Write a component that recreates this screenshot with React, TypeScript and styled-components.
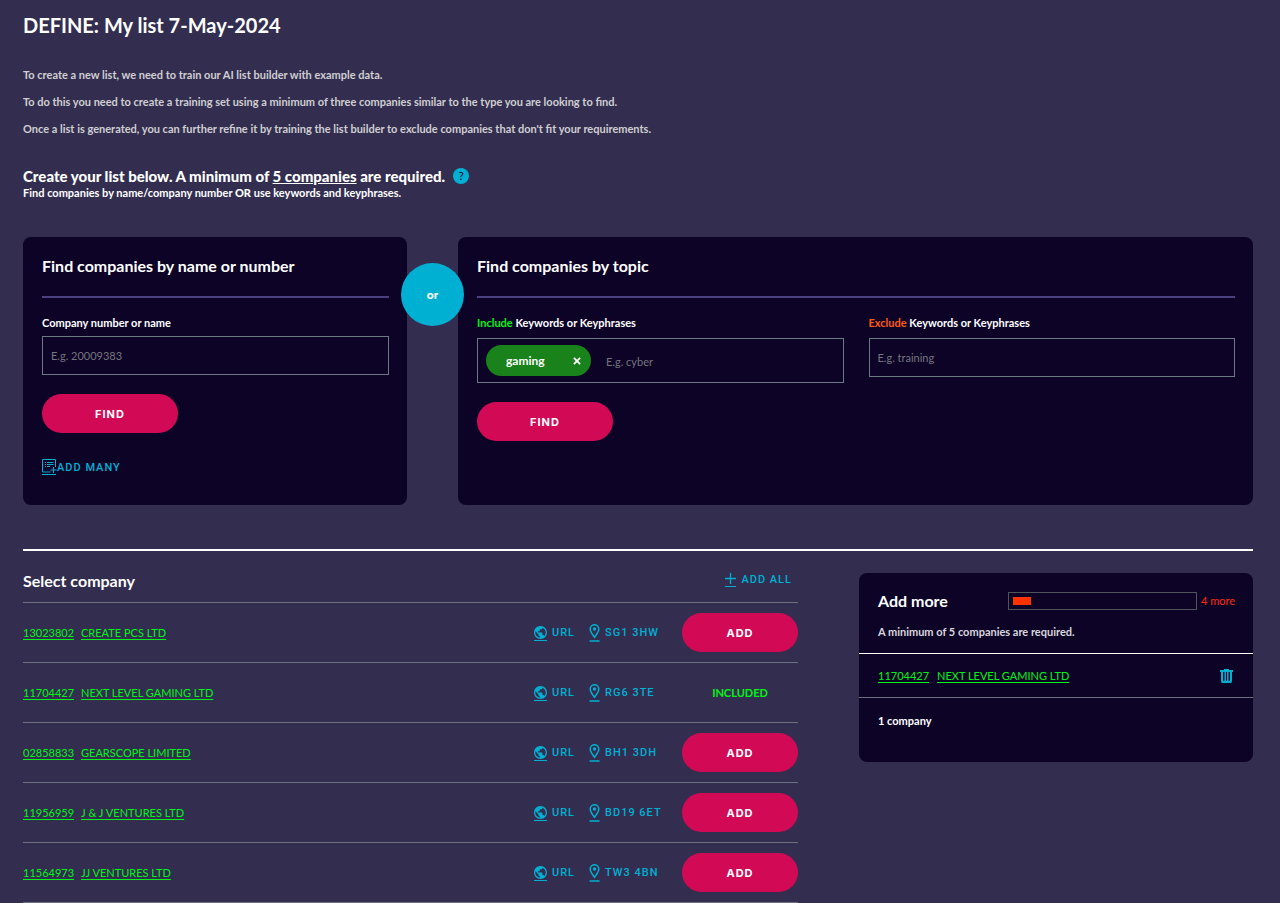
import React from "react";
import styled, { createGlobalStyle } from "styled-components";
import { MdPublic } from "react-icons/md";

const color = {
  page: "#332e50",
  panel: "#0c0327",
  pink: "#d20955",
  teal: "#00b0d3",
  green: "#00f514",
  grey: "#6c7080",
  violet: "#4b4080",
};

const GlobalStyle = createGlobalStyle`
  *, *::before, *::after { box-sizing: border-box; }
  body {
    margin: 0;
    background: ${color.page};
    color: #fff;
    font: 700 11px/16px Lato, "Open Sans", sans-serif;
  }
  h1, h2, h3, p, ul { margin: 0; padding: 0; }
  ul { list-style: none; }
  button, input { font: inherit; color: inherit; }
  button { border: 0; padding: 0; background: none; cursor: pointer; }
  svg { display: block; flex: none; }
`;

const Page = styled.main`
  padding: 12px 27px 0 23px;
`;

const Title = styled.h1`
  font-size: 20px;
  line-height: 26px;
`;

const Intro = styled.div`
  display: grid;
  gap: 11px;
  margin-top: 29px;
  color: #d0ced2;
`;

const Instructions = styled.section`
  margin-top: 30px;
`;

const InstructionTitle = styled.h2`
  display: flex;
  align-items: center;
  gap: 8px;
  font-size: 15px;
  font-weight: 900;
  line-height: 18px;
`;

const Help = styled.button`
  width: 16px;
  height: 16px;
  border-radius: 50%;
  background: ${color.teal};
  color: ${color.panel};
  font-size: 12px;
  font-weight: 400;
  line-height: 16px;
`;

const Finders = styled.div`
  display: grid;
  grid-template-columns: minmax(0, 384fr) 51px minmax(0, 795fr);
  margin-top: 36px;
`;

const Panel = styled.section`
  border-radius: 8px;
  background: ${color.panel};
`;

const FinderPanel = styled(Panel)`
  padding: 19px 18px 29px 19px;
`;

const PanelTitle = styled.h2`
  font-size: 16px;
  line-height: 20px;
`;

const FinderTitle = styled(PanelTitle)`
  padding-bottom: 20px;
  border-bottom: 2px solid ${color.violet};
  margin-bottom: 17px;
`;

const OrColumn = styled.div`
  display: flex;
  justify-content: center;
  align-items: flex-start;
  padding-top: 26px;
`;

const OrBadge = styled.span`
  flex: none;
  width: 63px;
  border-radius: 50%;
  background: ${color.teal};
  font-size: 12px;
  font-weight: 900;
  line-height: 63px;
  text-align: center;
  z-index: 1;
`;

const Label = styled.label<{ $gap: number }>`
  display: block;
  margin-bottom: ${(p) => p.$gap}px;
`;

const Word = styled.span<{ $tone: string }>`
  color: ${(p) => p.$tone};
`;

const TextInput = styled.input`
  display: block;
  width: 100%;
  height: 39px;
  padding: 0 8px;
  border: 1px solid #6d7982;
  background: transparent;
  font-weight: 400;
  &::placeholder { color: #77757d; opacity: 1; }
`;

const TagField = styled.div`
  display: flex;
  align-items: center;
  height: 45px;
  padding: 0 8px;
  border: 1px solid #6d7982;
`;

const TagInput = styled(TextInput)`
  flex: 1;
  min-width: 0;
  height: 31px;
  padding: 2px 0 0 15px;
  border: 0;
`;

const Tag = styled.span`
  display: flex;
  align-items: center;
  justify-content: space-between;
  flex: none;
  width: 105px;
  height: 31px;
  padding: 0 10px 0 20px;
  border-radius: 16px;
  background: #19821a;
  font-size: 12px;
`;

const TopicFields = styled.div`
  display: grid;
  grid-template-columns: repeat(2, minmax(0, 1fr));
  gap: 25px;
`;

const PillButton = styled.button<{ $width: number }>`
  width: ${(p) => p.$width}px;
  height: 39px;
  border-radius: 20px;
  background: ${color.pink};
  font: 700 11px/16px Inter, sans-serif;
  letter-spacing: 1px;
`;

const FindButton = styled(PillButton)`
  display: block;
  margin-top: 19px;
`;

const IconLink = styled.a<{ $gap?: number }>`
  display: inline-flex;
  align-items: center;
  gap: ${(p) => p.$gap ?? 5}px;
  color: ${color.teal};
  font: 500 11px/16px Roboto, sans-serif;
  letter-spacing: 1px;
  text-decoration: none;
  white-space: nowrap;
  vertical-align: middle;
`;

const AddMany = styled(IconLink)`
  margin-top: 26px;
`;

const Underlined = styled.span`
  display: block;
  padding-bottom: 1px;
  border-bottom: 1px solid ${color.teal};
`;

const Results = styled.div`
  display: grid;
  grid-template-columns: minmax(0, 775fr) minmax(0, 394fr);
  align-items: start;
  gap: 61px;
  margin-top: 44px;
  border-top: 2px solid #fff;
`;

const ListHeader = styled.div`
  display: flex;
  align-items: baseline;
  justify-content: space-between;
  height: 51px;
  padding: 20px 6px 0 0;
`;

const CompanyTable = styled.table`
  width: 100%;
  border-collapse: collapse;
  border-top: 1px solid ${color.grey};
`;

const Row = styled.tr`
  height: 60px;
  border-bottom: 1px solid ${color.grey};
`;

const Cell = styled.td<{ $width?: number; $center?: boolean }>`
  width: ${(p) => (p.$width ? `${p.$width}px` : "auto")};
  padding: 0;
  text-align: ${(p) => (p.$center ? "center" : "left")};
`;

const CompanyLink = styled.a`
  color: ${color.green};
  font-weight: 400;
  text-underline-offset: 2px;
`;

const Included = styled.span`
  color: ${color.green};
`;

const Summary = styled(Panel)`
  margin-top: 22px;
  padding-bottom: 33px;
`;

const SummaryHead = styled.div`
  padding: 18px 18px 13px 19px;
  border-bottom: 1px solid #fff;
`;

const SummaryTop = styled.div`
  display: flex;
  align-items: center;
  justify-content: space-between;
`;

const Progress = styled.div`
  display: flex;
  align-items: center;
  gap: 4px;
  color: #ff2a12;
  font-weight: 400;
`;

const Track = styled.div`
  width: 189px;
  height: 18px;
  padding: 4px;
  border: 1px solid #50545a;
`;

const Fill = styled.div`
  height: 8px;
  background: #ff3300;
`;

const Note = styled.p`
  margin-top: 13px;
  color: #d9d7dc;
`;

const SummaryRow = styled.li`
  display: flex;
  align-items: center;
  gap: 8px;
  height: 44px;
  padding: 0 20px 0 19px;
  border-bottom: 1px solid ${color.grey};
`;

const DeleteButton = styled.button`
  margin-left: auto;
  color: ${color.teal};
`;

const Count = styled.p`
  padding: 15px 19px 0;
`;

const ListAddIcon = () => (
  <svg width="15" height="17" viewBox="0 0 15 17" fill="none" stroke="currentColor">
    <path d="M13.5 8V.5H.5v12.500h8M3 3.500h1M5 3.500h6.500M3 5.500h1M5 5.500h6.500M3 7.500h1M5 7.500h3M11.500 8v6M8.500 11h6" />
    <path d="M0 15.500h14" strokeWidth="1" />
  </svg>
);

const PlusIcon = () => (
  <svg width="11" height="14" viewBox="0 0 11 14" fill="none" stroke="currentColor">
    <path d="M5.500 0v11M0 5.500h11" strokeWidth="1.300" />
    <path d="M0 13.500h11" strokeWidth="1" />
  </svg>
);

const PinIcon = () => (
  <svg width="11" height="18" viewBox="0 0 11 18" fill="none" stroke="currentColor">
    <path d="M5.500 13.300C3 10 1.200 7.500 1.200 5a4.300 4.300 0 0 1 8.600 0c0 2.500-1.800 5-4.300 8.300z" strokeWidth="1.500" />
    <circle cx="5.500" cy="5" r="1.700" fill="currentColor" stroke="none" />
    <path d="M.5 17h10" strokeWidth="1.500" />
  </svg>
);

const TrashIcon = () => (
  <svg width="13" height="14" viewBox="0 0 13 14" fill="none" stroke="currentColor">
    <path d="M0 2h13M4 1h5" strokeWidth="2" />
    <path d="M2 3v9q0 1.200 1.200 1.200h6.600q1.200 0 1.200-1.200V3" strokeWidth="2" />
    <path d="M5.200 3v9M7.800 3v9" strokeWidth="1.500" />
    <path d="M2 12.700h9" strokeWidth="1.800" />
  </svg>
);

const companies = [
  { number: "13023802", name: "CREATE PCS LTD", postcode: "SG1 3HW", included: false },
  { number: "11704427", name: "NEXT LEVEL GAMING LTD", postcode: "RG6 3TE", included: true },
  { number: "02858833", name: "GEARSCOPE LIMITED", postcode: "BH1 3DH", included: false },
  { number: "11956959", name: "J & J VENTURES LTD", postcode: "BD19 6ET", included: false },
  { number: "11564973", name: "JJ VENTURES LTD", postcode: "TW3 4BN", included: false },
];

const required = 5;

export default function App() {
  const chosen = companies.filter((c) => c.included);
  return (
    <>
      <GlobalStyle />
      <Page>
        <Title>DEFINE: My list 7-May-2024</Title>
        <Intro>
          <p>To create a new list, we need to train our AI list builder with example data.</p>
          <p>To do this you need to create a training set using a minimum of three companies similar to the type you are looking to find.</p>
          <p>Once a list is generated, you can further refine it by training the list builder to exclude companies that don't fit your requirements.</p>
        </Intro>
        <Instructions>
          <InstructionTitle>
            <span>Create your list below. A minimum of <u>5 companies</u> are required.</span>
            <Help type="button">?</Help>
          </InstructionTitle>
          <p>Find companies by name/company number <b>OR</b> use keywords and keyphrases.</p>
        </Instructions>

        <Finders>
          <FinderPanel>
            <FinderTitle>Find companies by name or number</FinderTitle>
            <Label htmlFor="company" $gap={5}>Company number or name</Label>
            <TextInput id="company" placeholder="E.g. 20009383" />
            <FindButton type="button" $width={136}>FIND</FindButton>
            <AddMany href="#add-many" $gap={0}><ListAddIcon />ADD MANY</AddMany>
          </FinderPanel>
          <OrColumn><OrBadge>or</OrBadge></OrColumn>
          <FinderPanel>
            <FinderTitle>Find companies by topic</FinderTitle>
            <TopicFields>
              <div>
                <Label htmlFor="include" $gap={7}><Word $tone={color.green}>Include</Word> Keywords or Keyphrases</Label>
                <TagField>
                  <Tag>gaming<button type="button" aria-label="Remove gaming">
                    <svg width="8" height="8" viewBox="0 0 9 9" stroke="#fff" strokeWidth="2"><path d="M1 1l7 7M8 1l-7 7" /></svg>
                  </button></Tag>
                  <TagInput id="include" placeholder="E.g. cyber" />
                </TagField>
              </div>
              <div>
                <Label htmlFor="exclude" $gap={7}><Word $tone="#ff5a14">Exclude</Word> Keywords or Keyphrases</Label>
                <TextInput id="exclude" placeholder="E.g. training" />
              </div>
            </TopicFields>
            <FindButton type="button" $width={136}>FIND</FindButton>
          </FinderPanel>
        </Finders>

        <Results>
          <section>
            <ListHeader>
              <PanelTitle>Select company</PanelTitle>
              <IconLink href="#add-all"><PlusIcon />ADD ALL</IconLink>
            </ListHeader>
            <CompanyTable>
              <tbody>
                {companies.map((c) => (
                  <Row key={c.number}>
                    <Cell $width={58}><CompanyLink href={`#${c.number}`}>{c.number}</CompanyLink></Cell>
                    <Cell><CompanyLink href={`#${c.number}`}>{c.name}</CompanyLink></Cell>
                    <Cell $width={55}>
                      <IconLink href="#url"><Underlined><MdPublic size={13} viewBox="2 2 20 20" /></Underlined>URL</IconLink>
                    </Cell>
                    <Cell $width={93}>
                      <IconLink href="#map"><PinIcon />{c.postcode}</IconLink>
                    </Cell>
                    <Cell $width={116} $center>
                      {c.included ? <Included>INCLUDED</Included> : <PillButton type="button" $width={116}>ADD</PillButton>}
                    </Cell>
                  </Row>
                ))}
              </tbody>
            </CompanyTable>
          </section>

          <Summary>
            <SummaryHead>
              <SummaryTop>
                <PanelTitle>Add more</PanelTitle>
                <Progress>
                  <Track><Fill style={{ width: `${(chosen.length / required) * 50}%` }} /></Track>
                  {required - chosen.length} more
                </Progress>
              </SummaryTop>
              <Note>A minimum of 5 companies are required.</Note>
            </SummaryHead>
            <ul>
              {chosen.map((c) => (
                <SummaryRow key={c.number}>
                  <CompanyLink href={`#${c.number}`}>{c.number}</CompanyLink>
                  <CompanyLink href={`#${c.number}`}>{c.name}</CompanyLink>
                  <DeleteButton type="button" aria-label={`Remove ${c.name}`}><TrashIcon /></DeleteButton>
                </SummaryRow>
              ))}
            </ul>
            <Count>{chosen.length} company</Count>
          </Summary>
        </Results>
      </Page>
    </>
  );
}
